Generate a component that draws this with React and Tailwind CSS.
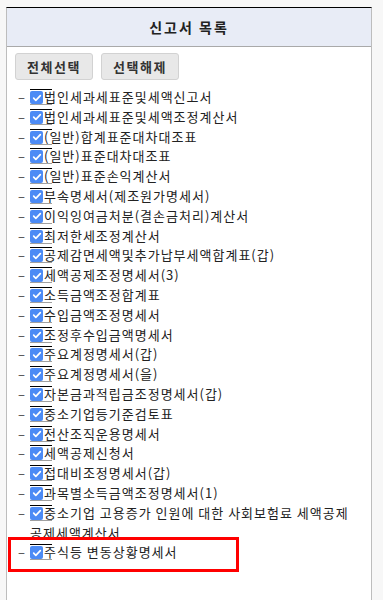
const forms = [
  "법인세과세표준및세액신고서",
  "법인세과세표준및세액조정계산서",
  "(일반)합계표준대차대조표",
  "(일반)표준대차대조표",
  "(일반)표준손익계산서",
  "부속명세서(제조원가명세서)",
  "이익잉여금처분(결손금처리)계산서",
  "최저한세조정계산서",
  "공제감면세액및추가납부세액합계표(갑)",
  "세액공제조정명세서(3)",
  "소득금액조정합계표",
  "수입금액조정명세서",
  "조정후수입금액명세서",
  "주요계정명세서(갑)",
  "주요계정명세서(을)",
  "자본금과적립금조정명세서(갑)",
  "중소기업등기준검토표",
  "전산조직운용명세서",
  "세액공제신청서",
  "접대비조정명세서(갑)",
  "과목별소득금액조정명세서(1)",
  "중소기업 고용증가 인원에 대한 사회보험료 세액공제 공제세액계산서",
];

const CheckBox = () => (
  <span className="relative inline-block w-[13px] h-[13px] mr-[1px] align-[-2px]">
    {/* stray tree line drawn round the box */}
    <span className="absolute left-0 top-[-2px] w-[22px] h-[16px] border-t border-black border-b border-b-[#a0a0a0]" />
    <span className="absolute inset-0 rounded-[2px] bg-[#4c8bf5] flex items-center justify-center">
      <svg viewBox="0 0 12 12" className="w-[10px] h-[10px]" fill="none">
        <path d="M2 6.2l2.6 2.6L10 3.2" stroke="#fff" strokeWidth="2" strokeLinecap="round" strokeLinejoin="round" />
      </svg>
    </span>
  </span>
);

const Row = ({ label }) => (
  <li className="flex">
    <span className="w-[23px] pl-[11px] shrink-0 text-[#444] tracking-normal">–</span>
    <span className="flex-1 pr-1 break-keep">
      <CheckBox />
      {label}
    </span>
  </li>
);

export default function App() {
  return (
    <div className="min-h-[600px] bg-[#f7f7f7] pt-[7px] font-['Noto_Sans_CJK_KR','Noto_Sans',sans-serif] text-[#222]">
      <div className="ml-[6px] w-[366px] min-h-[593px] bg-white border-x border-[#bdbdbd] border-t border-t-black">
        <div className="h-[39px] bg-[#e8ecf6] border-b border-[#a9a9a9] flex items-center justify-center text-[14px] font-bold tracking-[2px]">
          신고서 목록
        </div>

        <div className="flex gap-2 pl-2 pt-[6px]">
          <button className="w-[78px] h-[27px] bg-[#e8e8e8] border border-[#d2d2d2] rounded-[3px] text-[13px] font-bold text-[#333] tracking-[1.5px]">
            전체선택
          </button>
          <button className="w-[78px] h-[27px] bg-[#e8e8e8] border border-[#d2d2d2] rounded-[3px] text-[13px] font-bold text-[#333] tracking-[1.5px]">
            선택해제
          </button>
        </div>

        <ul className="mt-[7px] text-[13px] leading-[19.8px] tracking-[1px]">
          {forms.map((f) => (
            <Row key={f} label={f} />
          ))}
          <li className="relative flex">
            {/* highlight box */}
            <span className="absolute left-[1px] top-[-5px] w-[231px] h-[35px] border-[3px] border-[#ff0000] bg-white" />
            <span className="relative w-[23px] pl-[11px] shrink-0 text-[#444] tracking-normal">–</span>
            <span className="relative flex-1 pr-1">
              <CheckBox />
              주식등 변동상황명세서
            </span>
          </li>
        </ul>
      </div>
    </div>
  );
}
